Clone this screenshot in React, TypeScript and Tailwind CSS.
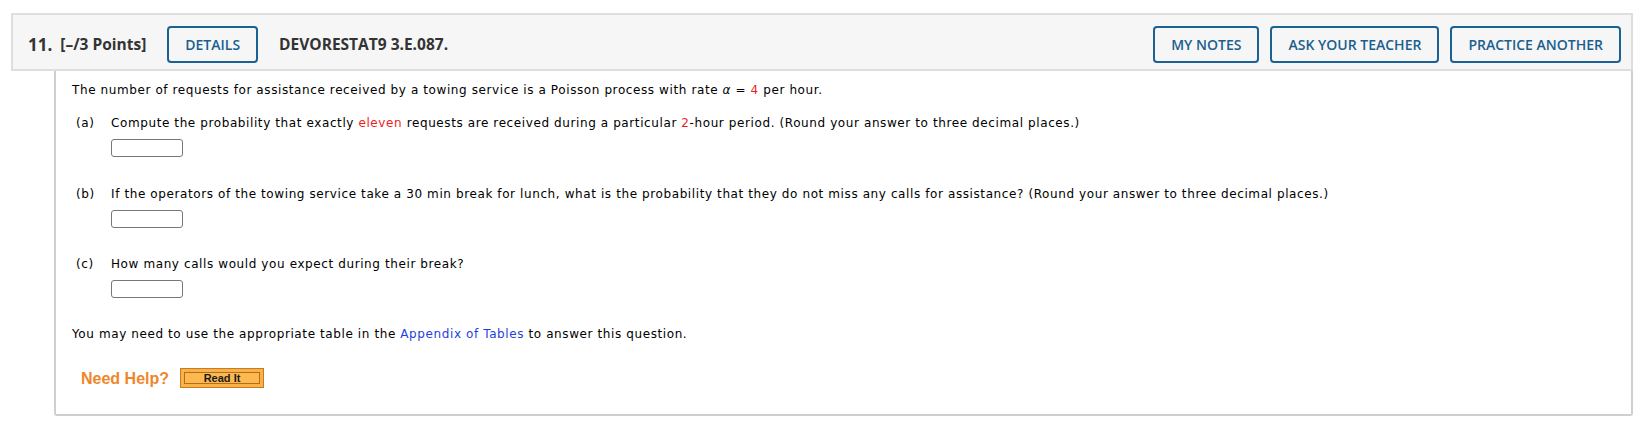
import React from "react";

const btn =
  "h-[37px] px-4 border-2 border-[#1b6193] rounded-[4px] text-[#1b5f8f] text-[14px] font-semibold flex items-center whitespace-nowrap";

function Answer() {
  return <div className="mt-2 w-[72px] h-[18px] border-[1.5px] border-[#777] rounded-[3px] bg-white" />;
}

function Part({ label, children, className }: { label: string; children: React.ReactNode; className?: string }) {
  return (
    <div className={"flex " + (className || "")}>
      <div className="w-[39px] pl-[4px] shrink-0">{label}</div>
      <div>
        <div>{children}</div>
        <Answer />
      </div>
    </div>
  );
}

export default function App() {
  return (
    <div className="bg-white min-h-[430px] pl-[11px] pr-[15px] pt-[13px]">
      <div className="border-2 border-[#dedede] bg-[#f6f6f6] pt-[11px] pb-[6px] pl-[15px] pr-[10px] flex items-center [font-family:'Open_Sans',sans-serif] text-[#333]">
        <span className="text-[17px] font-bold">11.</span>
        <span className="ml-[8px] text-[15.5px] font-bold">[–/3 Points]</span>
        <button className={btn + " ml-[21px]"}>DETAILS</button>
        <span className="ml-[21px] text-[15.5px] font-bold">DEVORESTAT9 3.E.087.</span>
        <div className="ml-auto flex gap-[11px]">
          <button className={btn}>MY NOTES</button>
          <button className={btn}>ASK YOUR TEACHER</button>
          <button className={btn}>PRACTICE ANOTHER</button>
        </div>
      </div>
      <div className="ml-[43px] border-2 border-t-0 border-[#cfcfcf] rounded-b-[3px] bg-white pl-[16px] pt-[12px] pb-[26px] [font-family:'DejaVu_Sans',sans-serif] text-[12px] leading-[15px] tracking-[0.6px] text-black">
        <p>
          The number of requests for assistance received by a towing service is a Poisson process with rate{" "}
          <i>α</i> = <span className="text-[#ee1c1c]">4</span> per hour.
        </p>
        <Part label="(a)" className="mt-[18px]">
          Compute the probability that exactly <span className="text-[#ee1c1c]">eleven</span> requests are received
          during a particular <span className="text-[#ee1c1c]">2</span>-hour period. (Round your answer to three
          decimal places.)
        </Part>
        <Part label="(b)" className="mt-[30px]">
          If the operators of the towing service take a 30 min break for lunch, what is the probability that they do
          not miss any calls for assistance? (Round your answer to three decimal places.)
        </Part>
        <Part label="(c)" className="mt-[29px]">
          How many calls would you expect during their break?
        </Part>
        <p className="mt-[29px]">
          You may need to use the appropriate table in the{" "}
          <a className="text-[#1f3fdc]">Appendix of Tables</a> to answer this question.
        </p>
        <div className="mt-[26px] pl-[9px] flex items-center tracking-normal">
          <span className="[font-family:'Liberation_Sans',Arial,sans-serif] font-bold text-[16px] text-[#f0862c]">Need Help?</span>
          <div className="ml-[11px] w-[84px] h-[20px] bg-[#f8b24a] border border-[#c97a22] p-[3px]">
            <div className="h-full border border-[#b36d1d] bg-[#fdb94f] flex items-center justify-center [font-family:'Liberation_Sans',Arial,sans-serif] font-bold text-[11px] leading-none text-[#1a1a1a]">
              Read It
            </div>
          </div>
        </div>
      </div>
    </div>
  );
}
